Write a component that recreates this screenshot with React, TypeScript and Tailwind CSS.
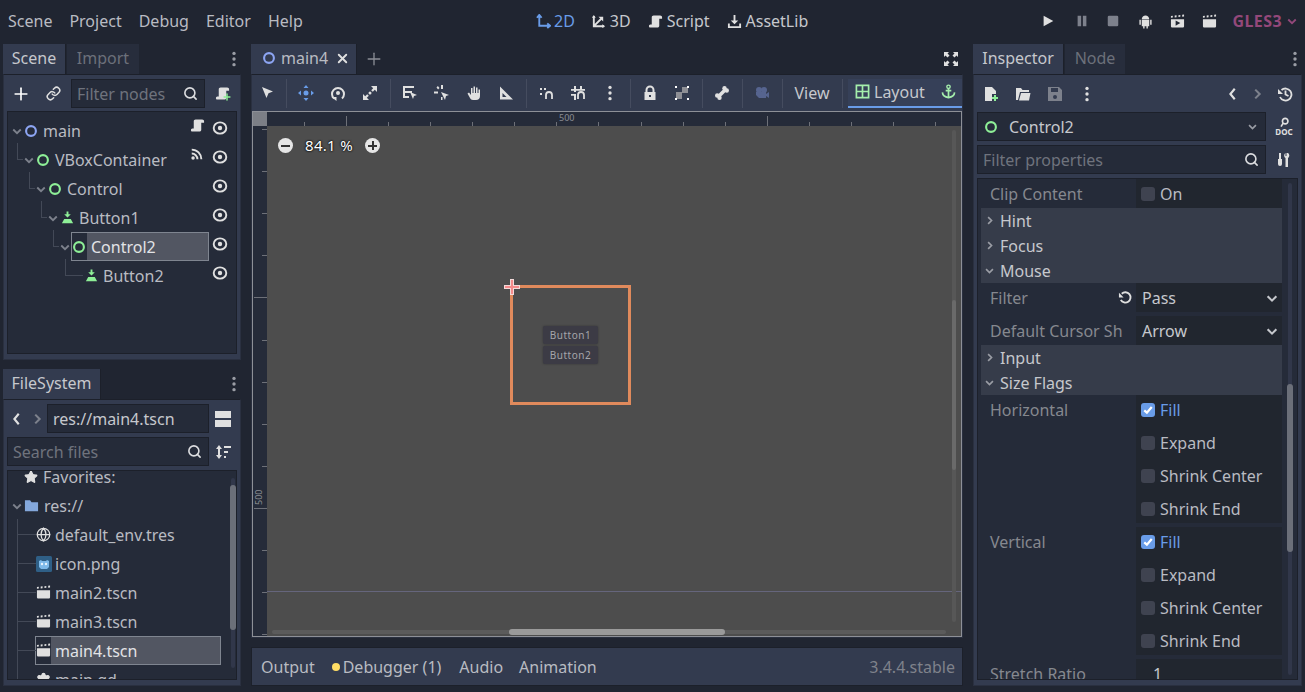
import { Globe, Link, Plus, Search, Settings, Star, X } from "lucide-react";
import type { ReactNode } from "react";

function Ico({ size = 16, className = "", children }: { size?: number; className?: string; children: ReactNode }) {
  return (
    <svg width={size} height={size} viewBox="0 0 16 16" className={"shrink-0 " + className}>
      {children}
    </svg>
  );
}

const Ring = ({ color = "text-[#8eef97]" }: { color?: string }) => (
  <Ico size={14} className={color}>
    <circle cx="8" cy="8" r="5.6" fill="none" stroke="currentColor" strokeWidth="2.4" />
  </Ico>
);
const BtnNode = () => (
  <Ico size={15} className="text-[#8eef97]">
    <path fill="currentColor" d="M7 1.500h2v3h2.500L8 8 4.500 4.500H7zM4.500 9.500h7L14 14H2z" />
  </Ico>
);
const ScrollIco = ({ size = 16 }: { size?: number }) => (
  <Ico size={size} className="text-[#e0e0e0]">
    <path fill="currentColor" d="M6 1.500h7c1.200 0 2 .8 2 2v1.500h-3v7.500c0 1-.8 2-2 2H2.500c-1 0-1.500-.7-1.500-1.500s.6-1.500 1.500-1.700H4V3.500c0-1.200.8-2 2-2z" />
  </Ico>
);
const Eye = () => (
  <Ico size={16} className="text-[#e0e0e0]">
    <ellipse cx="8" cy="8" rx="6.300" ry="5.600" fill="none" stroke="currentColor" strokeWidth="1.900" />
    <circle cx="8" cy="8" r="2.200" fill="currentColor" />
  </Ico>
);
const Signal = () => (
  <Ico size={14} className="text-[#e0e0e0]">
    <circle cx="3.500" cy="12.500" r="2" fill="currentColor" />
    <path d="M2 7.500a6.500 6.500 0 0 1 6.500 6.500M2 3a11 11 0 0 1 11 11" fill="none" stroke="currentColor" strokeWidth="2.200" />
  </Ico>
);
const Chev = ({ dir = "down", className = "text-[#7d818c]", size = 12 }: { dir?: "down" | "right" | "left"; className?: string; size?: number }) => {
  const d = dir === "down" ? "M3 6l5 5 5-5" : dir === "right" ? "M6 3l5 5-5 5" : "M10 2L5 8l5 6";
  return (
    <Ico size={size} className={className}>
      <path d={d} fill="none" stroke="currentColor" strokeWidth="2.400" />
    </Ico>
  );
};
const Kebab = ({ className = "text-[#9a9da5]" }: { className?: string }) => (
  <Ico size={18} className={className}>
    <circle cx="8" cy="3" r="1.500" fill="currentColor" />
    <circle cx="8" cy="8" r="1.500" fill="currentColor" />
    <circle cx="8" cy="13" r="1.500" fill="currentColor" />
  </Ico>
);
const Clap = ({ play = false }: { play?: boolean }) => (
  <Ico size={15} className="text-[#e0e0e0]">
    <path fill="currentColor" d="M1 2l2-.2v2l-2 .2zM5 1.600l2-.2v2l-2 .2zM9 1.200l2-.2v2l-2 .2zM13 .8l2-.2v2l-2 .2zM1 5.500h14V13c0 1-.7 1.500-1.500 1.500h-11C1.700 14.500 1 14 1 13z" />
    {play && <path fill="#202531" d="M6 7l5 2.700L6 12.500z" />}
  </Ico>
);

function Tab({ label, active, w }: { label: string; active?: boolean; w: string }) {
  return (
    <div
      className={
        "flex h-[30px] items-center justify-center pb-[2px] " + w + " " +
        (active ? "border-r border-r-[#1c202a] bg-[#333b4f] text-[#c6c8cd]" : "bg-[#272d3c] text-[#6c707a]")
      }
    >
      {label}
    </div>
  );
}

function Field({ text, w, dim, icon }: { text: string; w: string; dim?: boolean; icon?: boolean }) {
  return (
    <div className={"flex h-[29px] items-center border border-[#1c202a] bg-[#252b39] pl-[5px] pr-[6px] " + w}>
      <span className={"flex-1 whitespace-nowrap " + (dim ? "text-[#6f737d]" : "text-[#c6c8cd]")}>{text}</span>
      {icon && <Search size={15} strokeWidth={2.600} className="text-[#dcdde0]" />}
    </div>
  );
}

type TreeRow = {
  name: string;
  pad: string;
  chev: boolean;
  icon: ReactNode;
  guide?: string;
  sel?: boolean;
  extra?: ReactNode;
};

const sceneRows: TreeRow[] = [
  { name: "main", pad: "pl-[3px]", chev: true, icon: <Ring color="text-[#8da5f3]" />, extra: <ScrollIco size={15} /> },
  { name: "VBoxContainer", pad: "pl-[15px]", chev: true, icon: <Ring />, guide: "left-[9px] w-[6px]", extra: <Signal /> },
  { name: "Control", pad: "pl-[27px]", chev: true, icon: <Ring />, guide: "left-[21px] w-[6px]" },
  { name: "Button1", pad: "pl-[39px]", chev: true, icon: <BtnNode />, guide: "left-[33px] w-[6px]" },
  { name: "Control2", pad: "pl-[51px]", chev: true, icon: <Ring />, guide: "left-[45px] w-[6px]", sel: true },
  { name: "Button2", pad: "pl-[75px]", chev: false, icon: <BtnNode />, guide: "left-[57px] w-[18px]" },
];

function SceneTree() {
  return (
    <div className="min-h-0 flex-1 overflow-hidden border border-[#1c202a] bg-[#252b39] pt-[4px]">
      {sceneRows.map((r) => (
        <div key={r.name} className="relative flex h-[29px] items-center">
          {r.guide && <span className={"absolute top-[-2px] h-[17px] border-b border-l border-[#434957] " + r.guide} />}
          <div className={"flex h-full w-[202px] items-center " + r.pad}>
            {r.chev && <Chev />}
            <div
              className={
                "flex h-full flex-1 items-center " +
                (r.sel ? "border border-[#7f8590] bg-[linear-gradient(90deg,#252b39_15px,#525662_15px)] text-[#e2e3e6]" : "text-[#b9bbc2]")
              }
            >
              <span className={"flex w-[14px] justify-center " + (r.sel ? "" : "ml-[1px]")}>{r.icon}</span>
              <span className="ml-[5px]">{r.name}</span>
            </div>
          </div>
          <div className="-mt-[6px] flex w-[27px] justify-start pl-[3px]">
            <Eye />
          </div>
          {r.extra && <span className="absolute left-[182px] top-[2px]">{r.extra}</span>}
        </div>
      ))}
    </div>
  );
}

const fileRows: { name: string; icon: ReactNode; sel?: boolean }[] = [
  { name: "default_env.tres", icon: <Globe size={15} strokeWidth={2} className="text-[#e0e0e0]" /> },
  {
    name: "icon.png",
    icon: (
      <Ico size={16}>
        <rect width="16" height="16" rx="1.500" fill="#2f5f86" />
        <path d="M3 5l2-1 1 1h4l1-1 2 1v6l-2 2H5l-2-2z" fill="#7db8e8" />
        <circle cx="6" cy="8" r="1.200" fill="#e6f1fb" />
        <circle cx="10" cy="8" r="1.200" fill="#e6f1fb" />
      </Ico>
    ),
  },
  { name: "main2.tscn", icon: <Clap /> },
  { name: "main3.tscn", icon: <Clap /> },
  { name: "main4.tscn", icon: <Clap />, sel: true },
  { name: "main.gd", icon: <Settings size={15} fill="#e0e0e0" className="text-[#e0e0e0]" /> },
];

function FileTree() {
  return (
    <div className="relative mt-[1px] min-h-0 flex-1 overflow-hidden border border-[#1c202a] bg-[#252b39]">
      <div className="mt-[-9px]">
        <div className="flex h-[29px] items-center pl-[16px] text-[#b9bbc2]">
          <Star size={14} fill="#e0e0e0" className="text-[#e0e0e0]" />
          <span className="ml-[5px]">Favorites:</span>
        </div>
        <div className="flex h-[29px] items-center pl-[3px] text-[#b9bbc2]">
          <Chev />
          <Ico size={15} className="ml-[1px] text-[#84a8dc]">
            <path fill="currentColor" d="M1 2.500h5.500L8 4.500h7V14H1z" />
          </Ico>
          <span className="ml-[5px]">res://</span>
        </div>
        {fileRows.map((f) => (
          <div key={f.name} className="relative flex h-[29px] items-center pl-[28px]">
            <span className="absolute left-[9px] top-[14px] h-px w-[19px] bg-[#434957]" />
            <div
              className={
                "flex h-full w-[186px] items-center " +
                (f.sel ? "-ml-[1px] border border-[#7f8590] bg-[linear-gradient(90deg,#252b39_15px,#525662_15px)] text-[#e2e3e6]" : "text-[#b9bbc2]")
              }
            >
              <span className="flex w-[15px] justify-center">{f.icon}</span>
              <span className="ml-[4px]">{f.name}</span>
            </div>
          </div>
        ))}
      </div>
      <span className="absolute bottom-0 left-[9px] top-[48px] w-px bg-[#434957]" />
      <span className="absolute bottom-[11px] left-[223px] top-[7px] w-[4px] rounded bg-[#31374a]" />
      <span className="absolute left-[222px] top-[14px] h-[145px] w-[6px] rounded bg-[#6b6f79]" />
    </div>
  );
}

const Sep = () => (
  <span className="flex w-[8px] shrink-0 justify-center">
    <span className="h-[29px] w-px bg-[#454c5f]" />
  </span>
);

function TB({ children, className = "text-[#e0e0e0]" }: { children: ReactNode; className?: string }) {
  return <span className={"flex h-[29px] w-[32px] shrink-0 items-center justify-center " + className}>{children}</span>;
}

function CanvasToolbar() {
  return (
    <div className="flex h-[36px] shrink-0 items-center text-[#c6c8cd]">
      <span className="flex h-[29px] w-[31px] items-center justify-center text-[#e0e0e0]">
        <Ico size={16}><path fill="currentColor" d="M3 2l11 4.500-4.500 1.800L7.500 13z" /></Ico>
      </span>
      <Sep />
      <TB className="text-[#699ce8]">
        <Ico size={16}>
          <path fill="currentColor" d="M8 0l2.500 3h-5zM8 16l-2.500-3h5zM0 8l3-2.500v5zM16 8l-3 2.500v-5z" />
          <circle cx="8" cy="8" r="2.500" fill="currentColor" />
        </Ico>
      </TB>
      <TB>
        <Ico size={16}>
          <path d="M4 13.500A6 6 0 1 1 12 13.500" fill="none" stroke="currentColor" strokeWidth="2" />
          <circle cx="8" cy="8" r="2" fill="currentColor" />
          <path fill="currentColor" d="M1.500 12h5v4z" />
        </Ico>
      </TB>
      <TB>
        <Ico size={16}>
          <path fill="currentColor" d="M9 1h6v6l-2.200-2.200-2 2-1.600-1.600 2-2zM7 15H1V9l2.200 2.200 2-2 1.600 1.600-2 2z" />
          <circle cx="8" cy="8" r="1.500" fill="currentColor" />
        </Ico>
      </TB>
      <Sep />
      <TB>
        <Ico size={16}>
          <path fill="currentColor" d="M1 1h11v2H3v3h7v2H3v3h4v2H1zM8 7l7 3-3 1-1 3z" />
        </Ico>
      </TB>
      <TB>
        <Ico size={16}>
          <path fill="currentColor" d="M0 6.500h4v2H0zM7 0h2v4H7zM7 12h1.500v3H7zM2.500 2.500l1.400-1.400L5.500 3 4.100 4.400zM7 7l8 3-3 1-1 4z" />
        </Ico>
      </TB>
      <TB>
        <Ico size={16}>
          <path fill="currentColor" d="M5 3h1.500v5H7.500V1.500H9V8h1V2.500h1.500V8h1V4.500H14V11c0 2.500-1.500 4-4 4H7c-1.500 0-2.500-1-3-2L1.500 8.500 3 7.500 5 10z" />
        </Ico>
      </TB>
      <TB>
        <Ico size={16}>
          <path fill="currentColor" fillRule="evenodd" d="M2 1.500L15 14.500H2zM4.500 8v4h4z" />
        </Ico>
      </TB>
      <Sep />
      <TB>
        <Ico size={16}>
          <path d="M8 14V10a3 3 0 0 1 6 0v4" fill="none" stroke="currentColor" strokeWidth="1.800" />
          <path fill="currentColor" d="M2 3h2v2H2zM6 3h2v2H6zM2 8h2v2H2z" />
        </Ico>
      </TB>
      <TB>
        <Ico size={16}>
          <path d="M8 14V10a3 3 0 0 1 6 0v4" fill="none" stroke="currentColor" strokeWidth="1.800" />
          <path fill="currentColor" d="M4 1h2v6H4zM10 1h2v3h-2zM1 4h14v1.800H1zM1 9h5v1.800H1zM4 9h2v6H4z" />
        </Ico>
      </TB>
      <TB><Kebab className="text-[#e0e0e0]" /></TB>
      <Sep />
      <TB>
        <Ico size={16}>
          <path d="M4.500 7V5a3.500 3.500 0 0 1 7 0v2" fill="none" stroke="currentColor" strokeWidth="2" />
          <path fill="currentColor" fillRule="evenodd" d="M2.500 7h11v8h-11zM7 10v2h2v-2z" />
        </Ico>
      </TB>
      <TB>
        <Ico size={16}>
          <path fill="#8e8f95" d="M2 7h6V2h6v6H8v6H2z" />
          <path fill="#fff" d="M1 1h2v2H1zM13 1h2v2h-2zM1 13h2v2H1zM13 13h2v2h-2z" />
        </Ico>
      </TB>
      <Sep />
      <TB>
        <Ico size={16}>
          <path d="M5 11l6-6" stroke="currentColor" strokeWidth="3.600" />
          <circle cx="3.200" cy="10.500" r="2.200" fill="currentColor" />
          <circle cx="5.500" cy="12.800" r="2.200" fill="currentColor" />
          <circle cx="10.500" cy="3.200" r="2.200" fill="currentColor" />
          <circle cx="12.800" cy="5.500" r="2.200" fill="currentColor" />
        </Ico>
      </TB>
      <Sep />
      <TB className="text-[#56648f]">
        <Ico size={16}>
          <circle cx="5" cy="5" r="3" fill="currentColor" />
          <circle cx="10" cy="5" r="3" fill="currentColor" />
          <path fill="currentColor" d="M2 7h10v6H5l-3-3zM12 9l3-2v6l-3-2z" />
        </Ico>
      </TB>
      <Sep />
      <span className="flex w-[52px] shrink-0 justify-center">View</span>
      <Sep />
      <div className="ml-[2px] flex h-[29px] w-[114px] shrink-0 items-center border-b-2 border-[#699ce8] bg-[#364058] pb-[1px] pl-[7px]">
        <Ico size={15} className="text-[#a5efac]">
          <path d="M1.500 1.500h13v13h-13zM8 1.500v13M1.500 8h13" fill="none" stroke="currentColor" strokeWidth="1.800" />
        </Ico>
        <span className="ml-[4px] flex-1 text-[#c6c8cd]">Layout</span>
        <Ico size={15} className="mr-[6px] text-[#a5efac]">
          <circle cx="8" cy="3" r="1.800" fill="none" stroke="currentColor" strokeWidth="1.500" />
          <path d="M8 5v9.500M5 7h6M1.500 9c.3 3.500 3 5 6.500 5.500 3.500-.5 6.200-2 6.500-5.500" fill="none" stroke="currentColor" strokeWidth="1.800" />
        </Ico>
      </div>
    </div>
  );
}

function Rulers({ vertical }: { vertical?: boolean }) {
  const majors = vertical ? [297, 508] : [346, 557, 767];
  if (vertical) {
    const ticks = Array.from({ length: 13 }, (_, i) => 129 + Math.round(i * 42.1) - 126);
    return (
      <svg width="14" height="512" className="shrink-0">
        {ticks.map((y) => {
          const big = majors.includes(y + 126);
          return <line key={y} x1={big ? 1 : 9} x2="14" y1={y + 0.5} y2={y + 0.5} stroke="#6d7078" />;
        })}
        <text x="0" y="0" transform="translate(9,379) rotate(-90)" fontSize="9" fill="#8b8d93">500</text>
      </svg>
    );
  }
  const ticks = Array.from({ length: 16 }, (_, i) => 304 + Math.round(i * 42.07) - 267);
  return (
    <svg width="696" height="14" className="shrink-0">
      {ticks.map((x) => {
        const big = majors.includes(x + 267);
        return <line key={x} x1={x + 0.5} x2={x + 0.5} y1={big ? 4 : 10} y2="14" stroke="#6d7078" />;
      })}
      <text x="292" y="9" fontSize="9" fill="#8b8d93">500</text>
    </svg>
  );
}

function Canvas() {
  return (
    <div className="relative min-h-0 flex-1 overflow-hidden bg-[#4d4d4d]">
      <div className="absolute left-[11px] top-[12px] flex items-center text-[15px] tracking-[.3px] text-white [text-shadow:0_0_2px_#000,0_0_2px_#000]">
        <span className="flex size-[15px] items-center justify-center rounded-full bg-[#e6e6e6]">
          <span className="h-[2px] w-[9px] bg-[#333]" />
        </span>
        <span className="ml-[12px] w-[60px] whitespace-nowrap">84.1 %</span>
        <span className="relative flex size-[15px] items-center justify-center rounded-full bg-[#e6e6e6]">
          <span className="h-[2px] w-[9px] bg-[#333]" />
          <span className="absolute h-[9px] w-[2px] bg-[#333]" />
        </span>
      </div>

      <div className="absolute left-[243px] top-[159px] h-[120px] w-[121px] border-[3px] border-[#e08a5c]" />
      <div className="absolute left-[276px] top-[200px] flex h-[18px] w-[55px] items-center justify-center rounded-[2px] bg-[#3c3b45] text-[10px] tracking-[.5px] text-[#a5a5aa] shadow-[0_0_2px_#333]">Button1</div>
      <div className="absolute left-[276px] top-[220px] flex h-[18px] w-[55px] items-center justify-center rounded-[2px] bg-[#3c3b45] text-[10px] tracking-[.5px] text-[#a5a5aa] shadow-[0_0_2px_#333]">Button2</div>

      <svg width="16" height="16" className="absolute left-[237px] top-[153px]">
        <path d="M6 0h4v6h6v4h-6v6H6v-6H0V6h6z" fill="#f2d9d9" />
        <path d="M7 1h2v6h6v2H9v6H7V9H1V7h6z" fill="#f58a8a" />
      </svg>

      <div className="absolute inset-x-0 top-[465px] h-px bg-[#65657c]" />

      <div className="absolute right-[5px] top-[4px] h-[492px] w-[4px] rounded bg-[#575757]" />
      <div className="absolute right-[5px] top-[174px] h-[170px] w-[4px] rounded bg-[#6a6a6a]" />
      <div className="absolute bottom-[2px] left-[5px] h-[4px] w-[674px] rounded bg-[#5b5b5b]" />
      <div className="absolute bottom-[1px] left-[242px] h-[6px] w-[216px] rounded bg-[#9a9a9a]" />
    </div>
  );
}

function Check({ label, on }: { label: string; on?: boolean }) {
  return (
    <div className="flex h-[33px] items-center pl-[5px]">
      <span className={"flex size-[14px] items-center justify-center rounded-[3px] " + (on ? "bg-[#699ce8]" : "bg-[#3f4350]")}>
        {on && (
          <Ico size={12} className="text-white">
            <path d="M3 8.500l3.500 3L13 4" fill="none" stroke="currentColor" strokeWidth="3" />
          </Ico>
        )}
      </span>
      <span className={"ml-[5px] " + (on ? "text-[#699ce8]" : "text-[#b9bbc2]")}>{label}</span>
    </div>
  );
}

function Section({ label, open }: { label: string; open?: boolean }) {
  return (
    <div className="flex h-[25px] items-center bg-[#363c4a] pl-[3px] text-[#c6c8cd]">
      <Chev dir={open ? "down" : "right"} className="text-[#9a9da5]" size={11} />
      <span className="ml-[5px]">{label}</span>
    </div>
  );
}

function Prop({ label, h, children, reset }: { label: string; h: string; children: ReactNode; reset?: boolean }) {
  return (
    <div className={"flex " + h}>
      <div className="flex w-[155px] shrink-0 items-center pl-[9px] pr-[10px] text-[#85888f]">
        <span className="flex-1 whitespace-nowrap">{label}</span>
        {reset && (
          <Ico size={15} className="mr-[-7px] text-[#e0e0e0]">
            <path d="M4 4a5.500 5.500 0 1 1-1 6.500" fill="none" stroke="currentColor" strokeWidth="2" />
            <path fill="currentColor" d="M1 3v5h5z" />
          </Ico>
        )}
      </div>
      <div className="flex-1 bg-[#21262f] text-[#c6c8cd]">{children}</div>
    </div>
  );
}

function Select({ text }: { text: string }) {
  return (
    <div className="flex h-full items-center justify-between pl-[6px] pr-[3px]">
      <span>{text}</span>
      <Chev className="text-[#c6c8cd]" size={14} />
    </div>
  );
}

function FlagGroup({ label }: { label: string }) {
  return (
    <div className="mb-[4px] flex h-[128px]">
      <div className="w-[155px] pl-[9px] pt-[7px] text-[#85888f]">{label}</div>
      <div className="flex-1 bg-[#21262f]">
        <div className="-mt-[2px]">
          <Check label="Fill" on />
          <Check label="Expand" />
          <Check label="Shrink Center" />
          <Check label="Shrink End" />
        </div>
      </div>
    </div>
  );
}

function Inspector() {
  return (
    <div className="relative ml-[3px] mr-[3px] mt-[4px] min-h-0 flex-1 overflow-hidden border border-[#1c202a] bg-[#252b39]">
      <div className="ml-[3px] w-[301px]">
        <Prop label="Clip Content" h="h-[29px]">
          <div className="flex h-full items-center pl-[5px]">
            <span className="size-[14px] rounded-[3px] bg-[#3f4350]" />
            <span className="ml-[5px] text-[#b9bbc2]">On</span>
          </div>
        </Prop>
        <Section label="Hint" />
        <Section label="Focus" />
        <Section label="Mouse" open />
        <Prop label="Filter" h="h-[29px] mb-[4px]" reset>
          <Select text="Pass" />
        </Prop>
        <Prop label="Default Cursor Sh" h="h-[29px]">
          <Select text="Arrow" />
        </Prop>
        <Section label="Input" />
        <Section label="Size Flags" open />
        <FlagGroup label="Horizontal" />
        <FlagGroup label="Vertical" />
        <Prop label="Stretch Ratio" h="h-[29px]">
          <div className="pl-[17px] pt-[7px]">1</div>
        </Prop>
      </div>
      <span className="absolute bottom-[4px] right-[5px] top-[4px] w-[4px] rounded bg-[#31374a]" />
      <span className="absolute right-[4px] top-[205px] h-[168px] w-[6px] rounded bg-[#6b6f79]" />
    </div>
  );
}

export default function App() {
  return (
    <div className="flex h-screen w-full flex-col overflow-hidden bg-[#202531] text-[16px] leading-none text-[#c6c8cd] [font-family:'Noto_Sans',sans-serif]">
      <header className="flex h-[44px] shrink-0 items-center pb-[2px]">
        <nav className="flex w-[536px] gap-[17px] pl-[8px] text-[#b9bbc2]">
          <span>Scene</span>
          <span>Project</span>
          <span>Debug</span>
          <span>Editor</span>
          <span>Help</span>
        </nav>
        <div className="flex items-center">
          <Ico size={15} className="text-[#699ce8]">
            <path d="M3.500 1v11.500H15M1 4l2.500-3L6 4M12 10l3 2.500-3 2.500" fill="none" stroke="currentColor" strokeWidth="2" />
          </Ico>
          <span className="ml-[3px] text-[#699ce8]">2D</span>
          <Ico size={15} className="ml-[16px] text-[#e0e0e0]">
            <path d="M3 2v11h11M3 13l9-9" fill="none" stroke="currentColor" strokeWidth="2" />
            <path fill="currentColor" d="M8 3h5v5zM1 4l2-3 2 3zM12 11l3 2-3 2z" />
          </Ico>
          <span className="ml-[4px]">3D</span>
          <span className="ml-[17px]"><ScrollIco size={15} /></span>
          <span className="ml-[4px]">Script</span>
          <Ico size={15} className="ml-[17px] text-[#e0e0e0]">
            <path fill="currentColor" d="M7 1h2v6h3l-4 4-4-4h3zM1 10h2v3h10v-3h2v5H1z" />
          </Ico>
          <span className="ml-[4px]">AssetLib</span>
        </div>
        <div className="ml-auto flex items-center pr-[7px]">
          <Ico size={14} className="text-[#e0e0e0]"><path fill="currentColor" d="M3 2l11 6-11 6z" /></Ico>
          <Ico size={14} className="ml-[20px] text-[#7d818c]"><path fill="currentColor" d="M3 2h4v12H3zM9 2h4v12H9z" /></Ico>
          <Ico size={14} className="ml-[17px] text-[#7d818c]"><rect x="2" y="2" width="12" height="12" rx="1.500" fill="currentColor" /></Ico>
          <Ico size={15} className="ml-[18px] text-[#e0e0e0]">
            <path fill="currentColor" d="M4 6h8v7h-1.500v2.500h-1.500V13H7v2.500H5.500V13H4zM1.500 6H3v5.500H1.500zM13 6h1.500v5.500H13zM4 5.500C4 3 6 1.500 8 1.500s4 1.500 4 4z" />
          </Ico>
          <span className="ml-[17px]"><Clap play /></span>
          <span className="ml-[17px]"><Clap /></span>
          <span className="ml-[16px] font-bold tracking-[.4px] text-[#93487a]">GLES3</span>
          <Chev className="ml-[4px] text-[#93487a]" />
        </div>
      </header>

      <div className="flex min-h-0 flex-1 gap-[10px] pb-[6px] pl-[3px] pr-[3px]">
        <div className="flex w-[238px] shrink-0 flex-col gap-[9px]">
          <section className="flex h-[316px] shrink-0 flex-col">
            <div className="flex h-[30px] items-start gap-[1px]">
              <Tab label="Scene" active w="w-[63px]" />
              <Tab label="Import" w="w-[72px]" />
              <span className="-mr-[2px] ml-auto mt-[6px]"><Kebab /></span>
            </div>
            <div className="flex min-h-0 flex-1 flex-col gap-[3px] border border-[#2a3040] border-t-[#1c202a] bg-[#333b4f] px-[3px] pb-[5px] pt-[4px]">
              <div className="flex h-[29px] items-center">
                <span className="flex w-[28px] justify-center text-white"><Plus size={20} strokeWidth={2} /></span>
                <span className="flex w-[36px] justify-center text-[#e0e0e0]"><Link size={15} strokeWidth={2.400} /></span>
                <Field text="Filter nodes" w="w-[134px]" dim icon />
                <span className="relative ml-[10px]">
                  <ScrollIco size={15} />
                  <Plus size={10} strokeWidth={3.500} className="absolute -bottom-[1px] -right-[2px] text-[#8eef97]" />
                </span>
              </div>
              <SceneTree />
            </div>
          </section>

          <section className="flex min-h-0 flex-1 flex-col">
            <div className="flex h-[30px] items-start">
              <Tab label="FileSystem" active w="w-[98px]" />
              <span className="-mr-[2px] ml-auto mt-[6px]"><Kebab /></span>
            </div>
            <div className="flex min-h-0 flex-1 flex-col gap-[3px] border border-[#2a3040] border-t-[#1c202a] bg-[#333b4f] px-[3px] pb-[5px] pt-[4px]">
              <div className="flex h-[29px] items-center">
                <span className="flex w-[20px] justify-center"><Chev dir="left" className="text-[#e0e0e0]" size={14} /></span>
                <span className="flex w-[20px] justify-center"><Chev dir="right" className="text-[#7d818c]" size={14} /></span>
                <Field text="res://main4.tscn" w="w-[162px]" />
                <span className="ml-[6px] flex flex-col gap-[2px]">
                  <span className="h-[7px] w-[16px] bg-[#e0e0e0]" />
                  <span className="h-[7px] w-[16px] bg-[#e0e0e0]" />
                </span>
              </div>
              <div className="mt-[1px] flex h-[29px] items-center">
                <Field text="Search files" w="w-[202px]" dim icon />
                <Ico size={16} className="ml-[7px] text-[#e0e0e0]">
                  <path fill="currentColor" d="M3 1l3 4H4v6h2l-3 4-3-4h2V5H0zM8 2h7v2H8zM8 7h4v2H8zM8 12h2v2H8z" />
                </Ico>
              </div>
              <FileTree />
            </div>
          </section>
        </div>

        <div className="flex w-[712px] shrink-0 flex-col gap-[9px]">
          <section className="flex min-h-0 flex-1 flex-col">
            <div className="flex h-[30px] items-center">
              <div className="flex h-[30px] w-[106px] items-center border-r border-r-[#1c202a] bg-[#333b4f] pb-[2px] pl-[11px]">
                <Ring color="text-[#8da5f3]" />
                <span className="ml-[5px] text-[#b9bbc2]">main4</span>
                <X size={15} strokeWidth={3} className="ml-[7px] text-[#e0e0e0]" />
              </div>
              <Plus size={20} strokeWidth={1.600} className="ml-[7px] text-[#8a8d95]" />
              <span className="ml-auto mr-[4px]">
                <Ico size={16} className="text-[#e0e0e0]">
                  <path fill="currentColor" d="M1 1h5L4.500 2.500 6.500 4.500 4.500 6.500 2.500 4.500 1 6zM15 1v5l-1.500-1.500-2 2-2-2 2-2L10 1zM1 15v-5l1.500 1.500 2-2 2 2-2 2L6 15zM15 15h-5l1.500-1.500-2-2 2-2 2 2L15 10z" />
                </Ico>
              </span>
            </div>
            <div className="flex min-h-0 flex-1 flex-col border border-[#2a3040] border-t-[#1c202a] bg-[#333b4f]">
              <CanvasToolbar />
              <div className="flex min-h-0 flex-1 flex-col border border-[#8d9097] bg-[#252b39]">
                <div className="flex h-[14px] shrink-0">
                  <span className="h-full w-[14px] shrink-0 bg-[#7c7f86]" />
                  <Rulers />
                </div>
                <div className="flex min-h-0 flex-1">
                  <Rulers vertical />
                  <Canvas />
                </div>
              </div>
            </div>
          </section>

          <footer className="flex h-[39px] shrink-0 items-center border border-[#1c202a] bg-[#333b4f] pl-[9px] pr-[7px]">
            <span className="text-[#b9bbc2]">Output</span>
            <span className="ml-[17px] size-[8px] rounded-full bg-[#ffdd65]" />
            <span className="ml-[3px] text-[#b9bbc2]">Debugger (1)</span>
            <span className="ml-[18px] text-[#b9bbc2]">Audio</span>
            <span className="ml-[16px] text-[#b9bbc2]">Animation</span>
            <span className="ml-auto text-[#7f828b]">3.4.4.stable</span>
          </footer>
        </div>

        <section className="flex w-[329px] shrink-0 flex-col">
          <div className="flex h-[30px] items-start gap-[1px]">
            <Tab label="Inspector" active w="w-[91px]" />
            <Tab label="Node" w="w-[60px]" />
            <span className="-mr-[2px] ml-auto mt-[6px]"><Kebab /></span>
          </div>
          <div className="flex min-h-0 flex-1 flex-col border border-[#2a3040] border-t-[#1c202a] bg-[#333b4f] pb-[5px]">
            <div className="flex h-[33px] shrink-0 items-center pl-[1px] pt-[4px]">
              <span className="flex w-[32px] justify-center">
                <Ico size={16} className="text-[#e0e0e0]">
                  <path fill="currentColor" d="M2 1h7l4 4v3H9v7H2z" />
                  <path fill="#8eef97" d="M11 9h2v2h2v2h-2v2h-2v-2H9v-2h2z" />
                </Ico>
              </span>
              <span className="flex w-[32px] justify-center">
                <Ico size={16} className="text-[#e0e0e0]">
                  <path fill="currentColor" d="M1 2h5l1.500 2H14v2H5L3 14H1zM6 7h9.500L14 14.500H4z" />
                </Ico>
              </span>
              <span className="flex w-[32px] justify-center">
                <Ico size={16} className="text-[#7d818c]">
                  <path fill="currentColor" fillRule="evenodd" d="M1 1h11l3 3v11H1zM4 2v4h7V2zM8 9a2 2 0 1 0 0 4 2 2 0 0 0 0-4z" />
                </Ico>
              </span>
              <span className="flex w-[32px] justify-center"><Kebab className="text-[#e0e0e0]" /></span>
              <span className="ml-auto flex w-[24px] justify-center"><Chev dir="left" className="text-[#e0e0e0]" size={14} /></span>
              <span className="flex w-[24px] justify-center"><Chev dir="right" className="text-[#7d818c]" size={14} /></span>
              <span className="flex w-[32px] justify-center">
                <Ico size={16} className="text-[#e0e0e0]">
                  <path d="M4.500 4a6 6 0 1 1-1.500 7M8.500 4.500v4l3 1.500" fill="none" stroke="currentColor" strokeWidth="1.800" />
                  <path fill="currentColor" d="M1 3v5h5z" />
                </Ico>
              </span>
            </div>
            <div className="mt-[4px] flex h-[29px] shrink-0 items-center pl-[3px]">
              <div className="flex h-[29px] w-[289px] items-center border border-[#1c202a] bg-[#252b39] pl-[6px] pr-[7px]">
                <Ring />
                <span className="ml-[11px] flex-1">Control2</span>
                <Chev size={11} className="text-[#9a9da5]" />
              </div>
              <div className="ml-[8px] flex w-[20px] flex-col items-center leading-none text-[#e0e0e0]">
                <Ico size={11}>
                  <circle cx="9" cy="6" r="4" fill="none" stroke="currentColor" strokeWidth="2.400" />
                  <path d="M6 9l-3 5" stroke="currentColor" strokeWidth="2.400" />
                </Ico>
                <span className="text-[8px] font-bold">DOC</span>
              </div>
            </div>
            <div className="mt-[4px] flex h-[29px] shrink-0 items-center pl-[3px]">
              <Field text="Filter properties" w="w-[289px]" dim icon />
              <Ico size={16} className="ml-[10px] text-[#e0e0e0]">
                <path fill="currentColor" d="M3 1h2v6h1v5a2 2 0 0 1-4 0V7h1zM9.500 1v3h1V1H12c1.500 1 2 3.500 0 5v9h-2.500V6c-2-1.500-1.500-4 0-5z" />
              </Ico>
            </div>
            <div className="flex min-h-0 flex-1 flex-col">
              <Inspector />
            </div>
          </div>
        </section>
      </div>
    </div>
  );
}
